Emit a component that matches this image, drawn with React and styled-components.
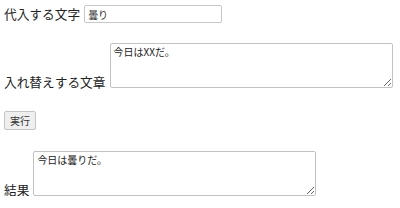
import React, { useState } from "react";
import styled, { createGlobalStyle } from "styled-components";

const GlobalStyle = createGlobalStyle`
  body {
    margin: 0;
    background: #fff;
    font-family: "Noto Sans CJK JP", "Liberation Sans", sans-serif;
    color: #222;
  }
`;

const Page = styled.div`
  display: flex;
  flex-direction: column;
  align-items: flex-start;
  padding: 4px 4px 0 4px;
`;

const Row = styled.div`
  display: flex;
  align-items: ${(p) => (p.$center ? "center" : "flex-end")};
  gap: 4px;
  margin-top: ${(p) => p.$top || 0}px;
`;

const Label = styled.span`
  font-size: 12.7px;
  line-height: 14px;
  margin-bottom: ${(p) => (p.$center ? 0 : -1)}px;
  white-space: nowrap;
`;

const TextInput = styled.input`
  box-sizing: border-box;
  width: 138px;
  height: 18px;
  padding: 1px 3px;
  border: 1px solid #c8c8c8;
  border-radius: 2px;
  font-family: inherit;
  font-size: 10px;
  color: #333;
  outline: none;
`;

const Area = styled.textarea`
  box-sizing: border-box;
  width: 283px;
  height: 45px;
  padding: 1px 3px;
  border: 1px solid #c2c2c2;
  border-radius: 2px;
  font-family: inherit;
  font-size: 10px;
  line-height: 13px;
  color: #222;
  outline: none;
  resize: both;
`;

const RunButton = styled.button`
  box-sizing: border-box;
  width: 32px;
  height: 19px;
  padding: 0;
  border: 1px solid #c4c4c4;
  border-radius: 2px;
  background: #efefef;
  font-family: inherit;
  font-size: 10px;
  color: #333;
`;

export default function App() {
  const [word, setWord] = useState("曇り");
  const [source, setSource] = useState("今日はXXだ。");
  const [result, setResult] = useState("今日は曇りだ。");

  const run = () => setResult(source.split("XX").join(word));

  return (
    <>
      <GlobalStyle />
      <Page>
        <Row $center $top={1}>
          <Label $center>代入する文字</Label>
          <TextInput value={word} onChange={(e) => setWord(e.target.value)} />
        </Row>
        <Row $top={20}>
          <Label>入れ替えする文章</Label>
          <Area value={source} onChange={(e) => setSource(e.target.value)} />
        </Row>
        <Row $top={23}>
          <RunButton onClick={run}>実行</RunButton>
        </Row>
        <Row $top={21}>
          <Label>結果</Label>
          <Area value={result} readOnly />
        </Row>
      </Page>
    </>
  );
}
